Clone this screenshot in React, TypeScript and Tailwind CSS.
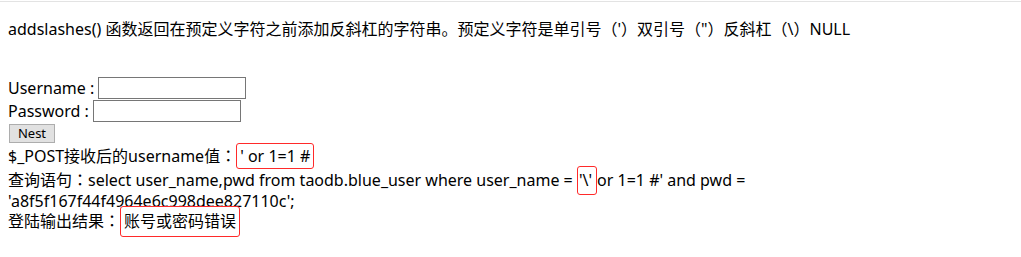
export default function App() {
  const font = { fontFamily: '"Noto Sans", "Noto Sans CJK SC", sans-serif' };
  // full-width colon, centred as in the reference
  const Colon = () => <span className="font-['Noto_Sans_CJK_TC']">：</span>;
  return (
    <div className="w-[1021px] h-[257px] bg-white text-black text-[16px] overflow-hidden" style={font}>
      <div className="mt-px h-px bg-[#e3e3e3]" />
      <div className="px-2">
        <div className="mt-[17px] h-[21px] leading-[21px] whitespace-nowrap">
          addslashes() 函数返回在预定义字符之前添加反斜杠的字符串。预定义字符是单引号（'）双引号（"）反斜杠（\）NULL
        </div>

        <div className="mt-[37px] h-[22px] flex items-center leading-[21px]">
          <span>Username :&nbsp;</span>
          <input className="w-[148px] h-[22px] border border-[#767676] px-1 outline-none" />
        </div>
        <div className="mt-px h-[22px] flex items-center leading-[21px]">
          <span>Password :&nbsp;</span>
          <input className="w-[148px] h-[22px] border border-[#767676] px-1 outline-none" />
        </div>
        <div className="mt-[2px] h-[19px] flex">
          <button className="ml-px w-[46px] h-[19px] bg-[#e1e1e1] border border-[#adadad] text-[13px] leading-[17px]">
            Nest
          </button>
        </div>

        <div className="h-[26px] flex items-center leading-[21px]">
          <span>$_POST接收后的username值<Colon /></span>
          <span className="border border-[#ff2a2a] rounded-[3px] h-[26px] px-[3px] flex items-center">' or 1=1 #</span>
        </div>
        <div className="leading-[20.5px] whitespace-nowrap">
          查询语句<Colon />select user_name,pwd from taodb.blue_user where user_name ={' '}
          <span className="inline-block border border-[#ff2a2a] rounded-[3px] -my-[5px] py-[3px] pl-px pr-[4px] leading-[21px]">'\'</span>
          or 1=1 #' and pwd =
          <br />
          'a8f5f167f44f4964e6c998dee827110c';
        </div>
        <div className="-mt-[2px] h-[24px] flex items-center leading-[21px]">
          <span>登陆输出结果<Colon /></span>
          <span className="border border-[#ff2a2a] rounded-[3px] h-[31px] px-[3px] flex items-center">账号或密码错误</span>
        </div>
      </div>
    </div>
  );
}
